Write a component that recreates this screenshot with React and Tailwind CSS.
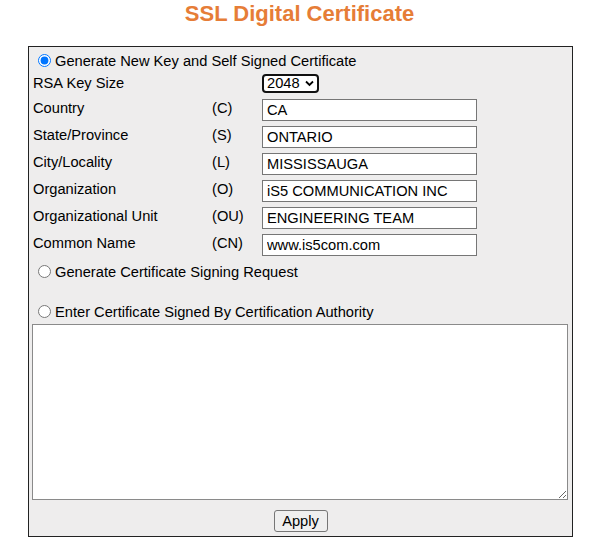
const ROWS = [
  { label: 'Country', code: '(C)', value: 'CA' },
  { label: 'State/Province', code: '(S)', value: 'ONTARIO' },
  { label: 'City/Locality', code: '(L)', value: 'MISSISSAUGA' },
  { label: 'Organization', code: '(O)', value: 'iS5 COMMUNICATION INC' },
  { label: 'Organizational Unit', code: '(OU)', value: 'ENGINEERING TEAM' },
  { label: 'Common Name', code: '(CN)', value: 'www.is5com.com' },
]

function Radio({ checked, label, className = '' }) {
  return (
    <label className={`flex items-center ${className}`}>
      <input type="radio" name="mode" defaultChecked={checked}
        className="w-[13px] h-[13px] ml-[6px] mr-[4px] m-0 shrink-0" />
      <span className="mt-[2px]">{label}</span>
    </label>
  )
}

export default function App() {
  return (
    <div className="w-[590px] h-[550px] bg-white text-black text-[14.67px] leading-[17px]"
      style={{ fontFamily: '"Liberation Sans", Arial, sans-serif' }}>
      <h1 className="h-[46px] pl-[9px] pt-px text-center text-[22px] leading-[25px] font-bold text-[#e67d37]">
        SSL Digital Certificate
      </h1>

      <div className="ml-[28px] w-[545px] border border-[#222] bg-[#eeeded] px-[3px] pt-[3px] pb-[4px]">
        <Radio checked label="Generate New Key and Self Signed Certificate" className="h-[21px]" />

        <div className="flex items-center h-[25px]">
          <span className="w-[230px] pl-px">RSA Key Size</span>
          <div className="relative">
            <select defaultValue="2048"
              className="appearance-none w-[57px] h-[19px] border-2 border-[#111] rounded-[4px] bg-white pl-[3px] text-[14.67px] leading-[15px]">
              <option>1024</option>
              <option>2048</option>
            </select>
            <svg className="absolute right-[5px] top-[6px] pointer-events-none" width="9" height="7" viewBox="0 0 9 7">
              <path d="M1 1.5 L4.5 5 L8 1.5" fill="none" stroke="#000" strokeWidth="1.8" />
            </svg>
          </div>
        </div>

        {ROWS.map(r => (
          <div key={r.code} className="flex items-center h-[27px]">
            <span className="w-[180px] pl-px -mt-[2px]">{r.label}</span>
            <span className="w-[50px] -mt-[2px]">{r.code}</span>
            <input type="text" defaultValue={r.value}
              className="w-[215px] h-[22px] border border-[#767676] bg-white px-[4px] text-[14.67px]" />
          </div>
        ))}

        <Radio label="Generate Certificate Signing Request" className="h-[27px]" />
        <Radio label="Enter Certificate Signed By Certification Authority" className="h-[22px] mt-[15px]" />

        <textarea className="block mt-[2px] w-[536px] h-[176px] border border-[#8a8a8a] bg-white" />

        <div className="flex justify-center mt-[10px]">
          <button className="w-[54px] h-[22px] border border-[#767676] rounded-[3px] bg-[#efefef] text-[14.67px]">
            Apply
          </button>
        </div>
      </div>
    </div>
  )
}
